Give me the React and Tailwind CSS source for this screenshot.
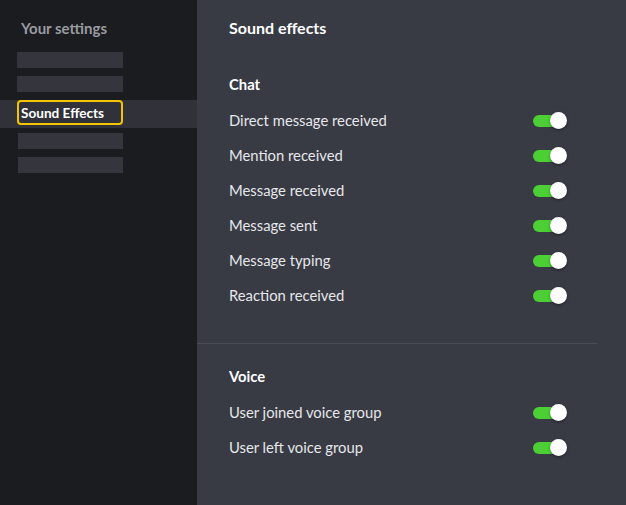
import React from "react";

const chat = [
    "Direct message received",
    "Mention received",
    "Message received",
    "Message sent",
    "Message typing",
    "Reaction received",
];

const voice = ["User joined voice group", "User left voice group"];

const Toggle = () => (
    <div className="relative w-[34px] h-[17px] flex items-center">
        <div className="w-[24px] h-[12px] rounded-full bg-[#4ccf35]" />
        <div className="absolute right-0 top-0 w-[17px] h-[17px] rounded-full bg-white shadow-[0_1px_3px_rgba(0,0,0,0.4)]" />
    </div>
);

const Row = ({ label }) => (
    <div className="h-[35px] flex items-center justify-between pr-[59px]">
        <span className="text-[14.8px] text-[#e6e7ea] leading-[20px] -mt-[1px]">{label}</span>
        <Toggle />
    </div>
);

const App = () => {
    return (
        <div
            className="w-[626px] h-[505px] flex overflow-hidden"
            style={{ fontFamily: "Lato, 'Noto Sans', sans-serif" }}
        >
            {/* sidebar */}
            <aside className="w-[197px] shrink-0 bg-[#1b1c20] pt-[18px]">
                <div className="pl-[21px] text-[15px] font-bold text-[#9a9ba1] leading-[20px]">
                    Your settings
                </div>
                <div className="mt-[14px] flex flex-col">
                    <div className="ml-[17px] w-[106px] h-[16px] bg-[#34353d]" />
                    <div className="ml-[17px] mt-[8px] w-[106px] h-[16px] bg-[#34353d]" />
                    <div className="mt-[8px] h-[28px] bg-[#303139]">
                        <div className="ml-[17px] w-[106px] h-[25px] border-2 border-[#f5c400] rounded-[4px] flex items-center pl-[2px] pt-[2px] text-[13.6px] font-bold text-white">
                            Sound Effects
                        </div>
                    </div>
                    <div className="ml-[18px] mt-[5px] w-[105px] h-[16px] bg-[#34353d]" />
                    <div className="ml-[18px] mt-[8px] w-[105px] h-[16px] bg-[#34353d]" />
                </div>
            </aside>

            {/* main */}
            <main className="flex-1 bg-[#383a44]">
                <div className="pl-[32px] pt-[18px]">
                    <h1 className="text-[16px] font-bold text-white leading-[20px]">Sound effects</h1>
                    <h2 className="mt-[36px] text-[14.8px] font-bold text-white leading-[20px]">Chat</h2>
                    <div className="mt-[9px]">
                        {chat.map((label) => (
                            <Row key={label} label={label} />
                        ))}
                    </div>
                </div>

                <div className="mt-[30px] mr-[29px] border-t border-[#4a4c56]" />

                <div className="pl-[32px] pt-[22px]">
                    <h2 className="text-[14.8px] font-bold text-white leading-[20px]">Voice</h2>
                    <div className="mt-[9px]">
                        {voice.map((label) => (
                            <Row key={label} label={label} />
                        ))}
                    </div>
                </div>
            </main>
        </div>
    );
};

export default App;
